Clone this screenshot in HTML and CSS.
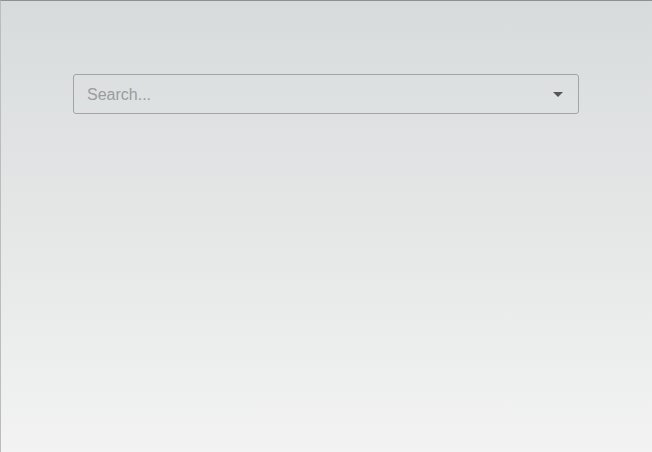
FILE: index.html
```html
<!DOCTYPE html>
<html>
<head>
<meta charset="utf-8">
<link rel="stylesheet" href="styles.css">
</head>
<body>
<div class="page">
  <div class="select">
    <span class="placeholder">Search...</span>
    <svg class="caret" width="10" height="5" viewBox="0 0 10 5"><path d="M0 0H10L5 5Z" fill="#555"/></svg>
  </div>
</div>
</body>
</html>
```
FILE: styles.css
```css
html, body {
  margin: 0;
  padding: 0;
  height: 100%;
}
body {
  font-family: "Liberation Sans", Arial, sans-serif;
}
.page {
  box-sizing: border-box;
  height: 452px;
  border-top: 1px solid #8c9192;
  border-left: 1px solid #b9bdbe;
  background: linear-gradient(to bottom, #d8dbdc 0%, #f2f3f2 100%);
  padding: 73px 73px 0 72px;
}
.select {
  box-sizing: border-box;
  height: 40px;
  border: 1px solid #a2a4a5;
  border-radius: 3px;
  display: flex;
  align-items: center;
  justify-content: space-between;
  padding: 0 15px 0 13px;
}
.placeholder {
  color: #9a9c9d;
  font-size: 16px;
  margin-top: 2px;
}
.caret {
  display: block;
  margin-top: 1px;
}
```
